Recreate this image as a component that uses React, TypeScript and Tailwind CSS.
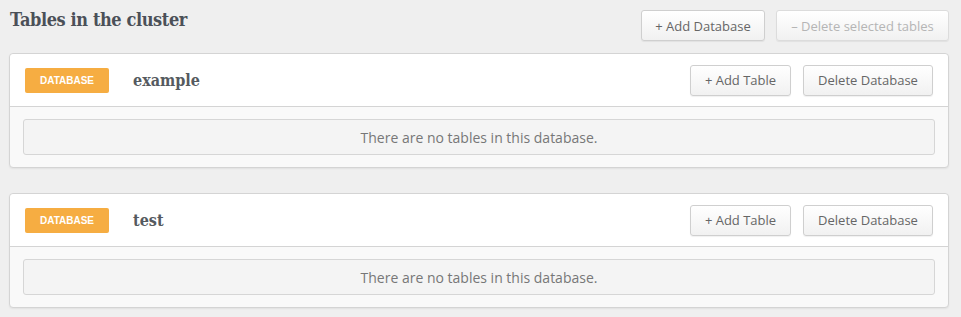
const slab = "font-['DejaVu_Serif_Condensed','DejaVu_Serif',serif]";
const sans = "font-['Open_Sans',sans-serif]";

const btn =
  "h-[31px] rounded-[3px] border border-[#cfcfcf] bg-gradient-to-b from-white to-[#f1f1f1] px-[13px] pt-[2px] text-[13px] text-[#666] shadow-[0_1px_1px_rgba(0,0,0,0.06)]";

function DatabaseCard({ name }: { name: string }) {
  return (
    <div className="rounded-[4px] border border-[#d4d4d4] bg-[#f9f9f9] shadow-[0_1px_2px_rgba(0,0,0,0.06)]">
      <div className="flex h-[53px] items-center rounded-t-[4px] border-b border-[#d4d4d4] bg-white pl-[15px] pr-[15px]">
        <span className="flex h-[25px] w-[84px] items-center justify-center rounded-[2px] bg-[#f6ad42] text-[10px] font-bold text-white font-['Liberation_Sans',sans-serif]">
          DATABASE
        </span>
        <span className={`ml-[24px] pt-[2px] text-[16px] font-bold text-[#555a60] ${slab}`}>{name}</span>
        <div className="ml-auto flex gap-[12px]">
          <button className={`${btn} w-[101px]`}>+ Add Table</button>
          <button className={`${btn} w-[130px]`}>Delete Database</button>
        </div>
      </div>
      <div className="px-[13px] pb-[12px] pt-[12px]">
        <div className="flex h-[36px] items-center justify-center rounded-[3px] border border-[#d6d6d6] bg-[#f4f4f4] text-[14px] text-[#777]">
          There are no tables in this database.
        </div>
      </div>
    </div>
  );
}

export default function App() {
  return (
    <div className={`min-h-[317px] w-[961px] bg-[#efefef] pl-[9px] pr-[12px] pt-[10px] ${sans}`}>
      <div className="flex items-start justify-between">
        <h1 className={`-mt-[2px] pl-[1px] text-[18px] font-bold leading-[24px] tracking-[-0.4px] text-[#4b5058] ${slab}`}>
          Tables in the cluster
        </h1>
        <div className="flex gap-[11px]">
          <button className={`${btn} w-[124px]`}>+ Add Database</button>
          <button className={`${btn} w-[173px] border-[#dcdcdc] text-[#b5b5b5]`}>– Delete selected tables</button>
        </div>
      </div>
      <div className="mt-[12px] flex flex-col gap-[25px]">
        <DatabaseCard name="example" />
        <DatabaseCard name="test" />
      </div>
    </div>
  );
}
